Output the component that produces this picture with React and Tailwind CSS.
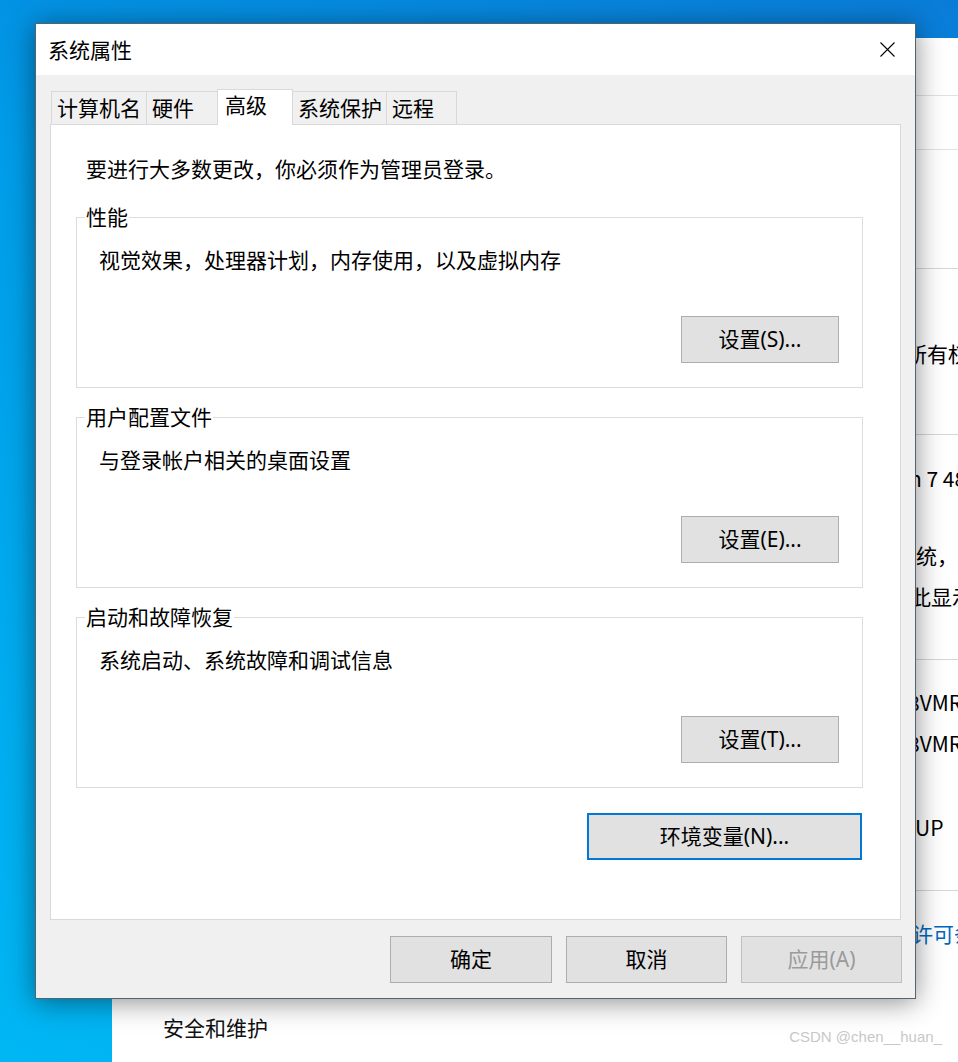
import React from 'react';

const font = "font-['Noto_Sans','Noto_Sans_CJK_SC',sans-serif]";

const tabs = [
  { label: '计算机名', cls: 'w-[96px]' },
  { label: '硬件', cls: 'w-[72px] -ml-px' },
  { label: '高级', cls: 'w-[76px] -ml-px', active: true },
  { label: '系统保护', cls: 'w-[95px] -ml-px' },
  { label: '远程', cls: 'w-[71px] -ml-px' },
];

const Btn = ({ className = '', children }) => (
  <div className={`flex h-[47px] items-center justify-center border border-[#adadad] bg-[#e1e1e1] ${className}`}>
    {children}
  </div>
);

const Group = ({ title, desc, btn, className = '' }) => (
  <div className={`relative h-[171px] w-[787px] border border-[#dcdcdc] ${className}`}>
    <span className="absolute left-[8px] top-[-15px] bg-white px-px leading-[28px]">{title}</span>
    <p className="pl-[22px] pt-[28px] leading-[28px]">{desc}</p>
    <div className="flex justify-end pr-[23px] pt-[42px]">
      <Btn className="w-[158px]">{btn}</Btn>
    </div>
  </div>
);

const BackWindow = () => (
  <div className="absolute left-[112px] top-[38px] right-0 bottom-0 flex flex-col overflow-hidden whitespace-nowrap bg-white font-['Noto_Sans_CJK_SC',sans-serif] text-[21px] leading-[28px] text-black">
    <div className="h-[58px] shrink-0 border-b border-[#e2e2e2]" />
    <div className="h-[54px] shrink-0 border-b border-[#e2e2e2]" />
    <div className="h-[119px] shrink-0 border-b border-[#d6d6d6]" />
    <div className="h-[166px] shrink-0 border-b border-[#d6d6d6] pl-[794px] pt-[70px]">所有权利。</div>
    <div className="flex h-[225px] shrink-0 flex-col border-b border-[#d6d6d6] pt-[29px]">
      <p className="pl-[797px]">n 7 4800H with Radeon Graphics</p>
      <p className="mt-[49px] pl-[783px]">系统，基于 x64 的处理器</p>
      <p className="mt-[13px] pl-[798px]">此显示器的笔或触控输入</p>
    </div>
    <div className="flex h-[231px] shrink-0 flex-col border-b border-[#d6d6d6] pt-[28px]">
      <p className="pl-[796px]">8VMR2Q</p>
      <p className="mt-[13px] pl-[796px]">8VMR2Q</p>
      <p className="mt-[56px] pl-[803px]">UP</p>
    </div>
    <div className="flex flex-1 flex-col pt-[28px]">
      <p className="pl-[800px] text-[#0067c0]">许可条款</p>
      <p className="mt-[66px] pl-[51px] text-[#111]">安全和维护</p>
    </div>
  </div>
);

const CloseIcon = () => (
  <svg width="15" height="15" viewBox="0 0 15 15" fill="none" stroke="#000" strokeWidth="1.1">
    <path d="M0.5 0.5 L14.5 14.5 M14.5 0.5 L0.5 14.5" />
  </svg>
);

export default function App() {
  return (
    <div className="relative h-[1062px] w-[958px] overflow-hidden bg-[linear-gradient(200deg,#0a7cd8_0%,#009ce8_35%,#00b6f3_100%)]">
      <BackWindow />

      <div className={`absolute left-[35px] top-[23px] flex h-[976px] w-[881px] flex-col border border-[#56636e] bg-[#f0f0f0] text-[21px] text-black shadow-[0_3px_26px_rgba(0,0,0,0.45)] ${font}`}>
        <div className="flex h-[51px] shrink-0 items-center justify-between bg-white pl-[12px] pr-[20px]">
          <span className="leading-[28px]">系统属性</span>
          <CloseIcon />
        </div>

        <div className="px-[14px] pt-[14px]">
          <div className="flex items-end pl-px">
            {tabs.map((t) =>
              t.active ? (
                <div
                  key={t.label}
                  className={`relative z-10 -mb-px h-[36px] border border-b-0 border-[#d9d9d9] bg-white pl-[7px] leading-[31px] ${t.cls}`}
                >
                  {t.label}
                </div>
              ) : (
                <div
                  key={t.label}
                  className={`h-[33px] border border-b-0 border-[#d9d9d9] bg-[#f0f0f0] pl-[5px] leading-[32px] ${t.cls}`}
                >
                  {t.label}
                </div>
              )
            )}
          </div>

          <div className="h-[796px] border border-[#d9d9d9] bg-white pl-[25px] pt-[30px]">
            <p className="ml-[10px] leading-[28px]">要进行大多数更改，你必须作为管理员登录。</p>
            <Group
              className="mt-[34px]"
              title="性能"
              desc="视觉效果，处理器计划，内存使用，以及虚拟内存"
              btn="设置(S)..."
            />
            <Group className="mt-[29px]" title="用户配置文件" desc="与登录帐户相关的桌面设置" btn="设置(E)..." />
            <Group className="mt-[29px]" title="启动和故障恢复" desc="系统启动、系统故障和调试信息" btn="设置(T)..." />
            <div className="mt-[25px] flex w-[787px] justify-end pr-px">
              <div className="flex h-[47px] w-[275px] items-center justify-center border-2 border-[#0078d7] bg-[#e1e1e1]">
                环境变量(N)...
              </div>
            </div>
          </div>
        </div>

        <div className="flex justify-end gap-[14px] pr-[13px] pt-[16px]">
          <Btn className="w-[162px]">确定</Btn>
          <Btn className="w-[161px]">取消</Btn>
          <Btn className="w-[161px] border-[#bfbfbf] bg-[#cccccc] text-[#9a9a9a]">应用(A)</Btn>
        </div>
      </div>

      <span className="absolute bottom-[14px] right-[16px] font-['Liberation_Sans',sans-serif] text-[15px] text-[#c8c8c8]">
        CSDN @chen__huan_
      </span>
    </div>
  );
}
